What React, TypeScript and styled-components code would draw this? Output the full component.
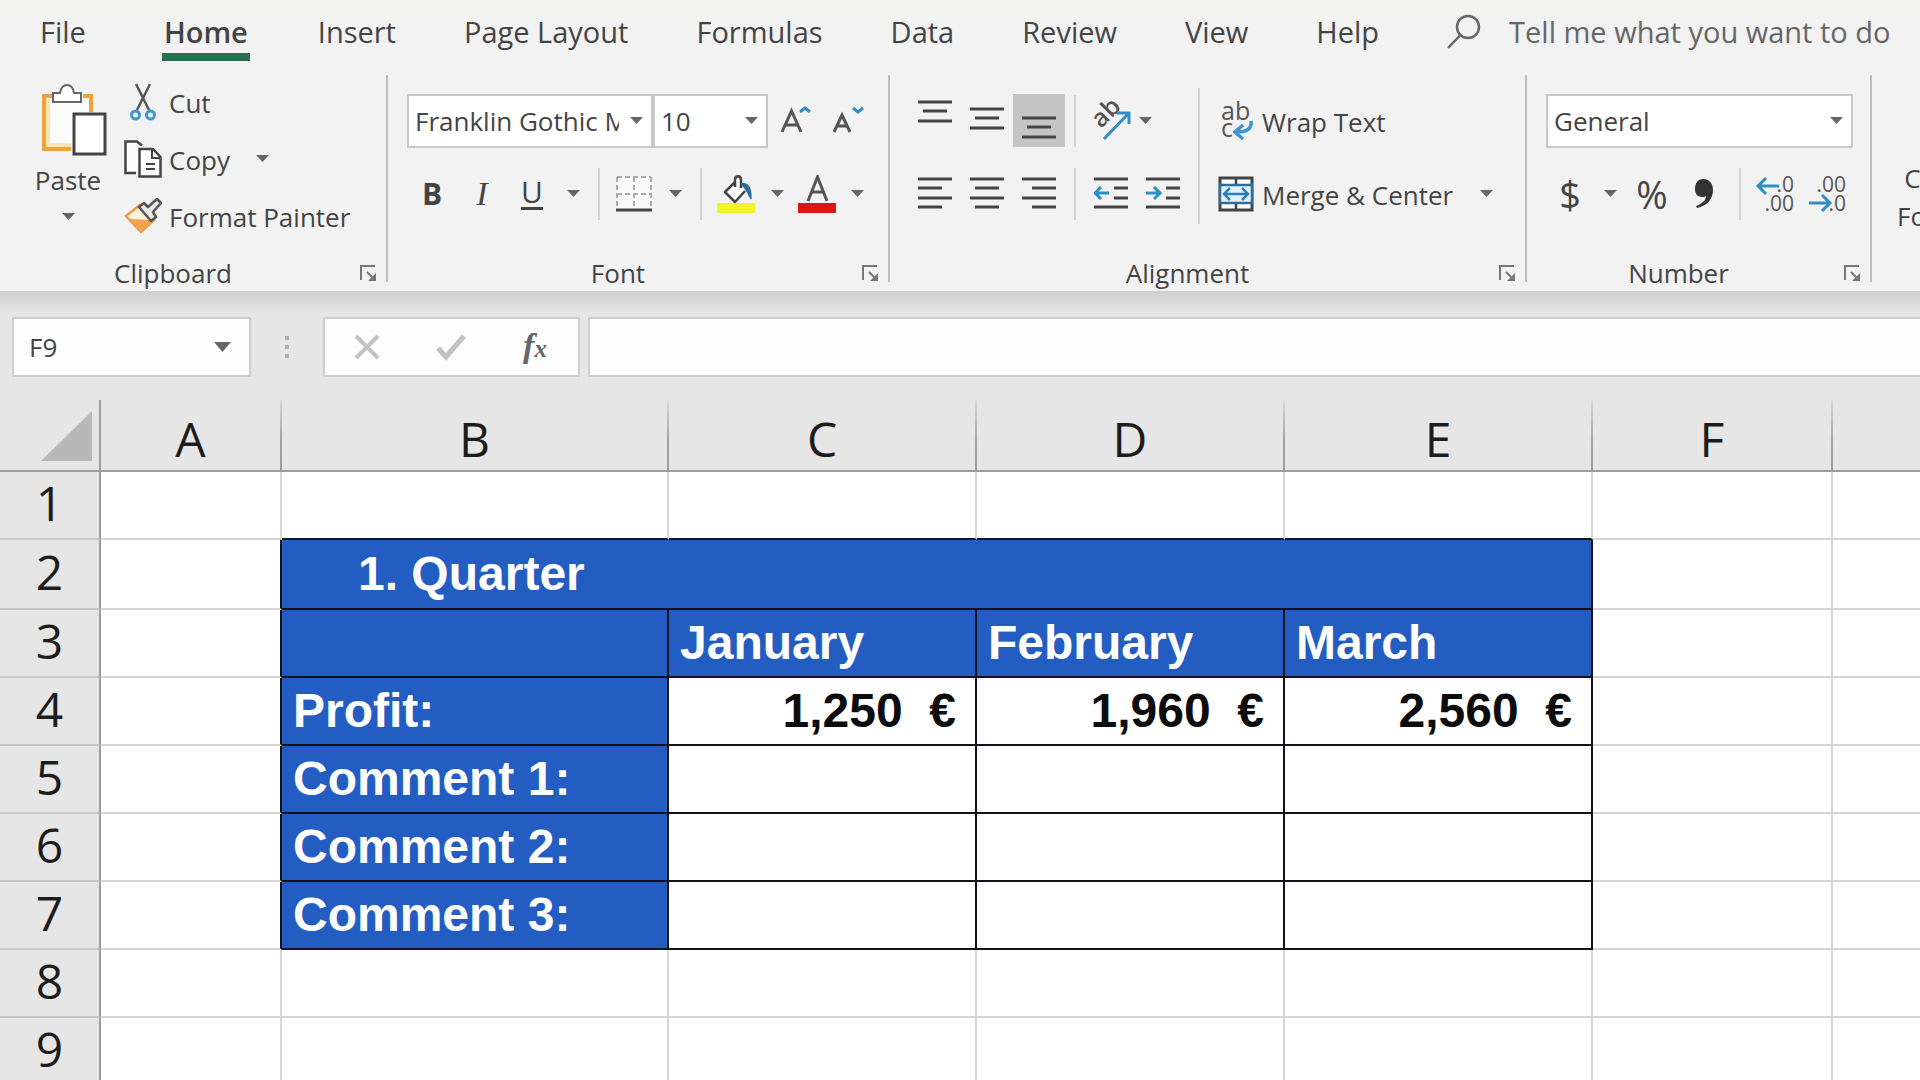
import React from "react";
import styled, { createGlobalStyle, css } from "styled-components";

const ui = `"Open Sans", "Noto Sans", sans-serif`;
const ink = "#444444";
const blue = "#2f8fc4";

const GlobalStyle = createGlobalStyle`
  * { box-sizing: border-box; }
  body { margin: 0; background: #e6e6e6; font-family: ${ui}; color: ${ink}; overflow: hidden; }
  button, select, input { font: inherit; color: inherit; }
`;

const Window = styled.div`
  display: flex;
  flex-direction: column;
  height: 100vh;
  overflow: hidden;
  > * {
    flex-shrink: 0;
  }
`;

/* ---------- tabs ---------- */
const Tabs = styled.nav`
  display: flex;
  align-items: flex-start;
  height: 75px;
  padding: 12px 0 0 40px;
  gap: 68px;
  background: linear-gradient(#f3f3ee, #f2f2f2 20px);
  white-space: nowrap;
`;

const Tab = styled.button<{ $active?: boolean }>`
  border: 0;
  padding: 0;
  background: none;
  font-size: 29px;
  line-height: 40px;
  font-weight: ${(p) => (p.$active ? 600 : 400)};
  &:first-child {
    margin-right: 8px;
  }
  ${(p) =>
    p.$active &&
    css`
      padding: 0 2px 1px;
      border-bottom: 8px solid #28704d;
    `}
`;

const TellMe = styled.label`
  display: flex;
  align-items: center;
  gap: 28px;
  flex: 1;
  min-width: 0;
`;

const TellInput = styled.input`
  flex: 1;
  min-width: 0;
  padding: 0;
  border: 0;
  outline: 0;
  background: none;
  font-size: 29px;
  line-height: 40px;
  height: 40px;
  &::placeholder {
    color: #666;
    opacity: 1;
  }
`;

/* ---------- ribbon ---------- */
const Ribbon = styled.section`
  display: flex;
  height: 216px;
  background: #f2f2f2;
  font-size: 26px;
  white-space: nowrap;
`;

const Group = styled.div<{ $w?: number }>`
  display: flex;
  flex-direction: column;
  justify-content: space-between;
  ${(p) => (p.$w ? `flex: 0 0 ${p.$w}px;` : "flex: 1; min-width: 0; overflow: hidden;")}
`;

const GroupLine = styled.div`
  flex: 0 0 2px;
  height: 207px;
  background: #bcbcbc;
`;

const GroupFoot = styled.div`
  display: flex;
  align-items: center;
  height: 36px;
`;

const GroupLabel = styled.span`
  flex: 1;
  text-align: center;
  font-size: 26px;
  line-height: 36px;
`;

const Launcher = styled.button`
  display: flex;
  justify-content: center;
  align-items: center;
  width: 40px;
  height: 36px;
  padding: 0 0 0 4px;
  border: 0;
  background: none;
`;

const Rows = styled.div`
  display: flex;
  flex-direction: column;
  gap: 20px;
  padding: 19px 0 0 19px;
`;

const WrapColumn = styled(Rows)`
  align-items: flex-start;
  padding-left: 0;
`;

const Row = styled.div`
  display: flex;
  align-items: center;
  height: 53px;
`;

const Tool = styled.button<{ $w?: number; $on?: boolean }>`
  display: flex;
  align-items: center;
  justify-content: center;
  width: ${(p) => p.$w ?? 52}px;
  height: 53px;
  padding: 0;
  border: 0;
  background: ${(p) => (p.$on ? "#c5c5c5" : "none")};
`;

const Thin = styled.div<{ $tall?: boolean }>`
  flex: 0 0 2px;
  height: ${(p) => (p.$tall ? 136 : 52)}px;
  margin: ${(p) => (p.$tall ? "13px 10px 0 9px" : "0 9px")};
  background: #d2d2d2;
`;

const Split = styled.div`
  display: flex;
`;

const TextTool = styled.button`
  display: flex;
  align-items: center;
  height: 53px;
  padding: 0;
  border: 0;
  background: none;
  line-height: 32px;
`;

const ToolText = styled.span`
  padding-top: 3px;
`;

const IconBox = styled.span`
  display: flex;
  justify-content: center;
  width: 52px;
`;

const ClipBody = styled.div`
  display: flex;
  padding: 0 0 0 28px;
`;

const PasteButton = styled.button`
  display: flex;
  flex-direction: column;
  align-items: center;
  width: 80px;
  padding: 9px 0 0;
  border: 0;
  background: none;
  line-height: 48px;
`;

const PasteCaret = styled.span`
  display: flex;
  padding-top: 9px;
`;

const ClipList = styled.div`
  display: flex;
  flex-direction: column;
  align-items: flex-start;
  padding-left: 9px;
  gap: 4px;
`;

const GlyphB = styled.span`
  font-size: 30px;
  font-weight: 700;
`;
const GlyphI = styled.span`
  font-family: "Liberation Serif", serif;
  font-size: 34px;
  font-style: italic;
`;
const GlyphU = styled.span`
  font-size: 30px;
  line-height: 30px;
  border-bottom: 3px solid ${ink};
`;
const Money = styled.span`
  font-size: 38px;
`;

const Combo = styled.span<{ $w: number }>`
  position: relative;
  display: flex;
  align-items: center;
  width: ${(p) => p.$w}px;
  height: 54px;
  svg {
    position: absolute;
    right: 10px;
    pointer-events: none;
  }
`;

const Select = styled.select`
  appearance: none;
  width: 100%;
  height: 100%;
  padding: 0 32px 0 6px;
  border: 2px solid #c8c8c8;
  border-radius: 0;
  background: #fff;
  outline: 0;
`;

const Conditional = styled.button`
  margin: 84px 0 0 25px;
  padding: 0;
  border: 0;
  background: none;
  line-height: 38px;
  align-self: flex-start;
`;

/* ---------- formula bar ---------- */
const FormulaBar = styled.section`
  display: flex;
  align-items: flex-start;
  height: 109px;
  padding: 26px 0 0 12px;
  background: linear-gradient(#cfcfcf, #e6e6e6 22px);
  font-size: 26px;
`;

const Box = styled.div<{ $w?: number }>`
  display: flex;
  align-items: center;
  height: 60px;
  border: 2px solid #cfcfcf;
  ${(p) => (p.$w ? `width: ${p.$w}px;` : "flex: 1; border-right: 0;")}
  background: #fdfdfd;
`;

const NameInput = styled.input`
  flex: 1;
  min-width: 0;
  padding: 0 0 0 15px;
  border: 0;
  background: none;
  outline: 0;
`;

const Bare = styled.button<{ $w: number }>`
  display: flex;
  justify-content: center;
  align-items: center;
  width: ${(p) => p.$w}px;
  height: 56px;
  padding: 0;
  border: 0;
  background: none;
`;

const Grip = styled.div`
  display: flex;
  flex-direction: column;
  align-items: center;
  justify-content: center;
  gap: 5px;
  width: 72px;
  height: 60px;
`;
const Dot = styled.i`
  width: 4px;
  height: 4px;
  background: #b0b0b0;
`;
const FxMark = styled.span`
  font-family: "Liberation Serif", serif;
  font-style: italic;
  font-weight: 700;
  font-size: 34px;
  line-height: 40px;
  color: #666;
  small {
    font-size: 25px;
  }
`;
const FormulaGap = styled.div`
  flex: 0 0 8px;
`;

/* ---------- sheet ---------- */
const Sheet = styled.table`
  table-layout: fixed;
  width: 100%;
  border-collapse: separate;
  border-spacing: 0;
  background: #fff;
  th:last-child,
  td:last-child {
    border-right: 0;
  }
`;

const Col = styled.col<{ $w?: number }>`
  ${(p) => p.$w && `width: ${p.$w}px;`}
`;

const head = css`
  padding: 0;
  background: #e6e6e6;
  color: #1c1c1c;
  font-weight: 400;
  font-size: 48px;
  line-height: 48px;
  text-align: center;
`;

const ColHead = styled.th`
  ${head}
  height: 72px;
  padding-top: 8px;
  border-style: solid;
  border-width: 0 2px 2px 0;
  border-image: linear-gradient(#dadada, #a0a0a0 60%, #9c9c9c) 2;
`;

const Corner = styled.th`
  ${head}
  height: 72px;
  border-bottom: 2px solid #9c9c9c;
  border-right: 2px solid #9c9c9c;
  vertical-align: bottom;
  svg {
    display: block;
    margin: 0 7px 9px auto;
  }
`;

const RowHead = styled.th`
  ${head}
  padding-bottom: 4px;
  border-right: 2px solid #9c9c9c;
  border-bottom: 2px solid #c6c6c6;
`;

const Line = styled.tr<{ $h: number }>`
  height: ${(p) => p.$h}px;
`;

const Cell = styled.td<{ $fill?: boolean; $right?: boolean; $darkR?: boolean; $darkB?: boolean; $indent?: boolean }>`
  padding: 0 ${(p) => (p.$right ? 19 : 0)}px 0 ${(p) => (p.$indent ? 76 : 11)}px;
  overflow: hidden;
  border-right: 2px solid ${(p) => (p.$darkR ? "#10131c" : "#d6d6d6")};
  border-bottom: 2px solid ${(p) => (p.$darkB ? "#10131c" : "#d6d6d6")};
  background: ${(p) => (p.$fill ? "#245dc1" : "#fff")};
  color: ${(p) => (p.$fill ? "#fff" : "#0c0c0c")};
  font-family: "Liberation Sans", Arial, sans-serif;
  font-weight: 700;
  font-size: 48px;
  line-height: 54px;
  text-align: ${(p) => (p.$right ? "right" : "left")};
  white-space: pre;
`;

/* ---------- icons ---------- */
const Caret = ({ w = 13 }: { w?: number }) => (
  <svg width={w} height={w === 13 ? 7 : 10} viewBox="0 0 13 7" preserveAspectRatio="none" aria-hidden="true">
    <path d="M0 0h13L6.500 7z" fill="#666" />
  </svg>
);

const LauncherIcon = () => (
  <svg width="17" height="17" viewBox="0 0 17 17" fill="none" stroke="#777" strokeWidth="2">
    <path d="M1 15V1h14M7 7l7 7" />
    <path d="M16 8v8H8z" fill="#777" stroke="none" />
  </svg>
);

const SearchIcon = () => (
  <svg width="34" height="36" viewBox="0 0 34 36" fill="none" stroke="#666" strokeWidth="2.500">
    <circle cx="21" cy="13" r="11" />
    <path d="M13.500 21L1 34" />
  </svg>
);

const PasteIcon = () => (
  <svg width="78" height="72" viewBox="-12 0 78 72" fill="none">
    <path d="M2 12h49v52H2z" fill="#fbfbfb" />
    <path d="M12 12H3v53h27M42 12h8v16" stroke="#eca33c" strokeWidth="4" />
    <path d="M7 15v46h23" stroke="#fbe3b0" strokeWidth="4" />
    <path d="M12 18V9h7c1-6 4-8 7-8s6 2 7 8h7v9z" fill="#fff" stroke="#666" strokeWidth="2" />
    <path d="M33 30h31v40H33z" fill="#fff" stroke="#444" strokeWidth="3" />
  </svg>
);

const CutIcon = () => (
  <svg width="26" height="38" viewBox="0 0 26 38" fill="none">
    <path d="M6 1l13 26M20 1L7 27" stroke="#555" strokeWidth="2.500" />
    <circle cx="5.500" cy="32" r="4" stroke="#3d97d3" strokeWidth="3" />
    <circle cx="20.500" cy="32" r="4" stroke="#3d97d3" strokeWidth="3" />
  </svg>
);

const CopyIcon = () => (
  <svg width="38" height="38" viewBox="0 0 38 38" fill="none" stroke="#444" strokeWidth="2.500">
    <path d="M12 33H1.500V1.500H13l5 4" fill="#fbfbfb" />
    <path d="M15.500 9H29l7.500 8v19.500h-21z" fill="#fff" />
    <path d="M28 9v9h8M22 24h9M22 29h9" strokeWidth="2" />
  </svg>
);

const PainterIcon = () => (
  <svg width="38" height="36" viewBox="0 0 38 36" fill="none">
    <path d="M2 18l14-11 14 15-13 12z" fill="#fff3dd" stroke="#eb9a45" strokeWidth="2.500" />
    <path d="M5 21l24 1-12 12z" fill="#f0a24e" />
    <path d="M15 9l5-4 4 4 9-8 4 4-8 9 3 5-5 4z" fill="#e9e9e9" stroke="#555" strokeWidth="2.500" strokeLinejoin="round" />
  </svg>
);

const FontSizeIcon = ({ up }: { up?: boolean }) => (
  <svg width="40" height="34" viewBox="-6 0 40 34" fill="none" strokeWidth="3">
    {up ? (
      <>
        <path d="M2 28L11.500 7 21 28M5 21h13" stroke="#555" />
        <path d="M20 8l5-4 5 4" stroke={blue} />
      </>
    ) : (
      <>
        <path d="M2 28l8-17 8 17M5 22h11" stroke="#555" />
        <path d="M21 4l5 4 5-4" stroke={blue} />
      </>
    )}
  </svg>
);

const BorderIcon = () => (
  <svg width="36" height="36" viewBox="0 0 36 36" fill="none">
    <path d="M1 1h34v32H1z" fill="#fafafa" />
    <path d="M1 1h34M1 1v32M35 1v32M18 1v32M1 18h34" stroke="#aaa" strokeWidth="2" strokeDasharray="5 3" />
    <path d="M0 34h36" stroke="#444" strokeWidth="3" />
  </svg>
);

const FillIcon = () => (
  <svg width="38" height="38" viewBox="0 0 38 38" fill="none">
    <path d="M0 28h38v10H0z" fill="#f1f52a" />
    <path d="M18 7L8 17l10 10L28 16M18 12V5c0-5 6-5 6 0v8" fill="#fff" stroke="#444" strokeWidth="2.500" strokeLinejoin="round" />
    <path d="M25 9c6-1 9 4 9 15l-4-8z" fill="#2c6c9c" stroke="#2c6c9c" strokeWidth="1.500" />
  </svg>
);

const FontColorIcon = () => (
  <svg width="38" height="38" viewBox="0 0 38 38" fill="none">
    <path d="M0 28h38v10H0z" fill="#dc1414" />
    <path d="M10 26L19.500 2 29 26M13 17h13" stroke="#555" strokeWidth="3" />
  </svg>
);

/* Each line is [x1, x2, y] on a 34 x 53 canvas. */
const Bars = ({ lines }: { lines: number[][] }) => (
  <svg width="34" height="53" viewBox="0 0 34 53" stroke="#444" strokeWidth="3">
    {lines.map(([a, b, y]) => (
      <path key={y} d={`M${a} ${y}H${b}`} />
    ))}
  </svg>
);
const vertical = (y: number) => [[0, 34, y], [5, 29, y + 9], [0, 34, y + 19]];
const horizontal = (a: number, b: number) => [[0, 34, 12], [a, b, 21], [0, 34, 31], [a, b, 40]];

const IndentIcon = ({ right }: { right?: boolean }) => (
  <svg width="34" height="53" viewBox="0 0 34 53" fill="none" stroke="#444" strokeWidth="3">
    <path d="M0 12h34M20 21h14M20 31h14M0 40h34" />
    <path d={right ? "M0 26h14M8 20l6 6-6 6" : "M15 26H1M7 20l-6 6 6 6"} stroke={blue} />
  </svg>
);

const DrawnIcon = styled.svg`
  overflow: visible;
  fill: none;
  text {
    font-family: ${ui};
    fill: #555;
  }
`;

const OrientationIcon = () => (
  <DrawnIcon width="40" height="40" viewBox="0 0 40 40">
    <text x="10" y="28" transform="rotate(-45 10 28)" fontSize="25" fontWeight="600">ab</text>
    <path d="M13 38L37 13M26 12h12v11" stroke={blue} strokeWidth="3" />
  </DrawnIcon>
);

const WrapIcon = () => (
  <DrawnIcon width="36" height="42" viewBox="0 0 36 42">
    <text x="3" y="20" fontSize="25">ab</text>
    <text x="3" y="37" fontSize="25">c</text>
    <path d="M33 21c1 7-3 11-15 11M25 25l-8 7 8 7" stroke="#3a95d0" strokeWidth="3.500" />
  </DrawnIcon>
);

const MergeIcon = () => (
  <svg width="36" height="36" viewBox="0 0 36 36" fill="none" strokeWidth="3">
    <path d="M2 2h32v32H2z" fill="#fff" stroke="#444" />
    <path d="M2 9h32v18H2z" fill="#e4f2fb" stroke="#2b6f99" strokeWidth="2.500" />
    <path d="M18 2v6M18 28v6" stroke="#444" strokeWidth="2.500" />
    <path d="M7 18h22M12 12l-6 6 6 6M24 12l6 6-6 6" stroke="#2b7fb4" strokeWidth="2.500" />
  </svg>
);

const CommaIcon = () => (
  <svg width="20" height="32" viewBox="0 0 20 32">
    <path d="M9 1c6 0 10 4 10 11 0 9-6 16-16 18l-1-2c6-2 10-6 10-10-1 1-3 1-4 1-5 0-7-4-7-8 0-6 3-10 8-10z" fill="#333" />
  </svg>
);

const DecimalIcon = ({ less }: { less?: boolean }) => (
  <DrawnIcon width="38" height="40" viewBox="0 0 38 40">
    <g fontSize="21" textAnchor="end">
      <text x="37" y="18">{less ? ".00" : ".0"}</text>
      <text x="37" y="37">{less ? ".0" : ".00"}</text>
    </g>
    <path d={less ? "M0 29h20M13 21l8 8-8 8" : "M22 12H2M9 4l-8 8 8 8"} stroke={blue} strokeWidth="3" />
  </DrawnIcon>
);

/* ---------- data ---------- */
const columns = ["A", "B", "C", "D", "E", "F", ""];
const widths = [101, 181, 387, 308, 308, 308, 240];
const labels: Record<number, string[]> = {
  3: ["", "January", "February", "March"],
  4: ["Profit:", "1,250  €", "1,960  €", "2,560  €"],
  5: ["Comment 1:", "", "", ""],
  6: ["Comment 2:", "", "", ""],
  7: ["Comment 3:", "", "", ""],
};
const rows = [1, 2, 3, 4, 5, 6, 7, 8, 9];

const SheetRow = ({ n }: { n: number }) => {
  const boxed = n >= 2 && n <= 7;
  return (
    <Line $h={n === 2 ? 70 : 68}>
      <RowHead scope="row">{n}</RowHead>
      <Cell $darkR={boxed} />
      {n === 2 ? (
        <Cell colSpan={4} $fill $indent $darkR $darkB>1. Quarter</Cell>
      ) : (
        (labels[n] ?? ["", "", "", ""]).map((text, i) => (
          <Cell
            key={i}
            $fill={boxed && (i === 0 || n === 3)}
            $right={n === 4 && i > 0}
            $darkR={boxed}
            $darkB={n <= 7}
          >
            {text}
          </Cell>
        ))
      )}
      <Cell />
      <Cell />
    </Line>
  );
};

const GroupFooter = ({ name }: { name: string }) => (
  <GroupFoot>
    <GroupLabel>{name}</GroupLabel>
    <Launcher aria-label={`${name} settings`}>
      <LauncherIcon />
    </Launcher>
  </GroupFoot>
);

const Drop = ({ w = 32, label }: { w?: number; label: string }) => (
  <Tool $w={w} aria-label={label}>
    <Caret />
  </Tool>
);

const LabelledTool = ({ icon, children }: { icon: React.ReactNode; children: React.ReactNode }) => (
  <TextTool>
    <IconBox>{icon}</IconBox>
    <ToolText>{children}</ToolText>
  </TextTool>
);

export default function App() {
  return (
    <Window>
      <GlobalStyle />
      <Tabs>
        {["File", "Home", "Insert", "Page Layout", "Formulas", "Data", "Review", "View", "Help"].map((t) => (
          <Tab key={t} $active={t === "Home"}>{t}</Tab>
        ))}
        <TellMe>
          <SearchIcon />
          <TellInput placeholder="Tell me what you want to do" aria-label="Tell me what you want to do" />
        </TellMe>
      </Tabs>

      <Ribbon>
        <Group $w={386}>
          <ClipBody>
            <PasteButton>
              <PasteIcon />
              Paste
              <PasteCaret><Caret /></PasteCaret>
            </PasteButton>
            <ClipList>
              <LabelledTool icon={<CutIcon />}>Cut</LabelledTool>
              <Split>
                <LabelledTool icon={<CopyIcon />}>Copy</LabelledTool>
                <Drop w={66} label="Copy options" />
              </Split>
              <LabelledTool icon={<PainterIcon />}>Format Painter</LabelledTool>
            </ClipList>
          </ClipBody>
          <GroupFooter name="Clipboard" />
        </Group>
        <GroupLine />

        <Group $w={500}>
          <Rows>
            <Row>
              <Combo $w={246}>
                <Select aria-label="Font"><option>Franklin Gothic Medium</option></Select>
                <Caret />
              </Combo>
              <Combo $w={115}>
                <Select aria-label="Font size"><option>10</option></Select>
                <Caret />
              </Combo>
              <Tool aria-label="Increase font size"><FontSizeIcon up /></Tool>
              <Tool aria-label="Decrease font size"><FontSizeIcon /></Tool>
            </Row>
            <Row>
              <Tool $w={50}><GlyphB>B</GlyphB></Tool>
              <Tool $w={50}><GlyphI>I</GlyphI></Tool>
              <Tool $w={50}><GlyphU>U</GlyphU></Tool>
              <Drop label="Underline options" />
              <Thin />
              <Tool $w={50} aria-label="Borders"><BorderIcon /></Tool>
              <Drop label="Border options" />
              <Thin />
              <Tool $w={50} aria-label="Fill color"><FillIcon /></Tool>
              <Drop label="Fill options" />
              <Tool $w={48} aria-label="Font color"><FontColorIcon /></Tool>
              <Drop label="Font color options" />
            </Row>
          </Rows>
          <GroupFooter name="Font" />
        </Group>
        <GroupLine />

        <Group $w={635}>
          <Split>
            <Rows>
              <Row>
                <Tool aria-label="Top align"><Bars lines={vertical(8)} /></Tool>
                <Tool aria-label="Middle align"><Bars lines={vertical(15)} /></Tool>
                <Tool $on aria-label="Bottom align"><Bars lines={vertical(24)} /></Tool>
                <Thin />
                <Tool aria-label="Orientation"><OrientationIcon /></Tool>
                <Drop w={16} label="Orientation options" />
              </Row>
              <Row>
                <Tool aria-label="Align left"><Bars lines={horizontal(0, 24)} /></Tool>
                <Tool aria-label="Center"><Bars lines={horizontal(5, 29)} /></Tool>
                <Tool aria-label="Align right"><Bars lines={horizontal(10, 34)} /></Tool>
                <Thin />
                <Tool aria-label="Decrease indent"><IndentIcon /></Tool>
                <Tool aria-label="Increase indent"><IndentIcon right /></Tool>
              </Row>
            </Rows>
            <Thin $tall />
            <WrapColumn>
              <LabelledTool icon={<WrapIcon />}>Wrap Text</LabelledTool>
              <Split>
                <LabelledTool icon={<MergeIcon />}>Merge &amp; Center</LabelledTool>
                <Drop w={66} label="Merge options" />
              </Split>
            </WrapColumn>
          </Split>
          <GroupFooter name="Alignment" />
        </Group>
        <GroupLine />

        <Group $w={343}>
          <Rows>
            <Row>
              <Combo $w={307}>
                <Select aria-label="Number format"><option>General</option></Select>
                <Caret />
              </Combo>
            </Row>
            <Row>
              <Tool $w={48}><Money>$</Money></Tool>
              <Drop label="Currency options" />
              <Tool><Money>%</Money></Tool>
              <Tool aria-label="Comma style"><CommaIcon /></Tool>
              <Thin />
              <Tool aria-label="Increase decimal"><DecimalIcon /></Tool>
              <Tool aria-label="Decrease decimal"><DecimalIcon less /></Tool>
            </Row>
          </Rows>
          <GroupFooter name="Number" />
        </Group>
        <GroupLine />

        <Group>
          <Conditional>
            Conditional<br />Formatting <Caret />
          </Conditional>
        </Group>
      </Ribbon>

      <FormulaBar>
        <Box $w={239}>
          <NameInput defaultValue="F9" aria-label="Name box" />
          <Bare $w={54} aria-label="Name list"><Caret w={17} /></Bare>
        </Box>
        <Grip><Dot /><Dot /><Dot /></Grip>
        <Box $w={257}>
          <Bare $w={84} aria-label="Cancel">
            <svg width="26" height="26" viewBox="0 0 26 26" stroke="#c2c2c2" strokeWidth="4"><path d="M2 2l22 22M24 2L2 24" /></svg>
          </Bare>
          <Bare $w={84} aria-label="Enter">
            <svg width="30" height="28" viewBox="0 0 30 28" fill="none" stroke="#c2c2c2" strokeWidth="5"><path d="M2 15l8 9L28 3" /></svg>
          </Bare>
          <Bare $w={84} aria-label="Insert function"><FxMark>f<small>x</small></FxMark></Bare>
        </Box>
        <FormulaGap />
        <Box><NameInput aria-label="Formula" /></Box>
      </FormulaBar>

      <Sheet>
        <colgroup>
          {widths.map((w, i) => <Col key={i} $w={w} />)}
          <Col />
        </colgroup>
        <thead>
          <tr>
            <Corner aria-label="Select all">
              <svg width="51" height="50" viewBox="0 0 51 50"><path d="M51 0v50H0z" fill="#b8b8b8" /></svg>
            </Corner>
            {columns.map((c, i) => <ColHead key={i} scope="col">{c}</ColHead>)}
          </tr>
        </thead>
        <tbody>
          {rows.map((n) => <SheetRow key={n} n={n} />)}
        </tbody>
      </Sheet>
    </Window>
  );
}
